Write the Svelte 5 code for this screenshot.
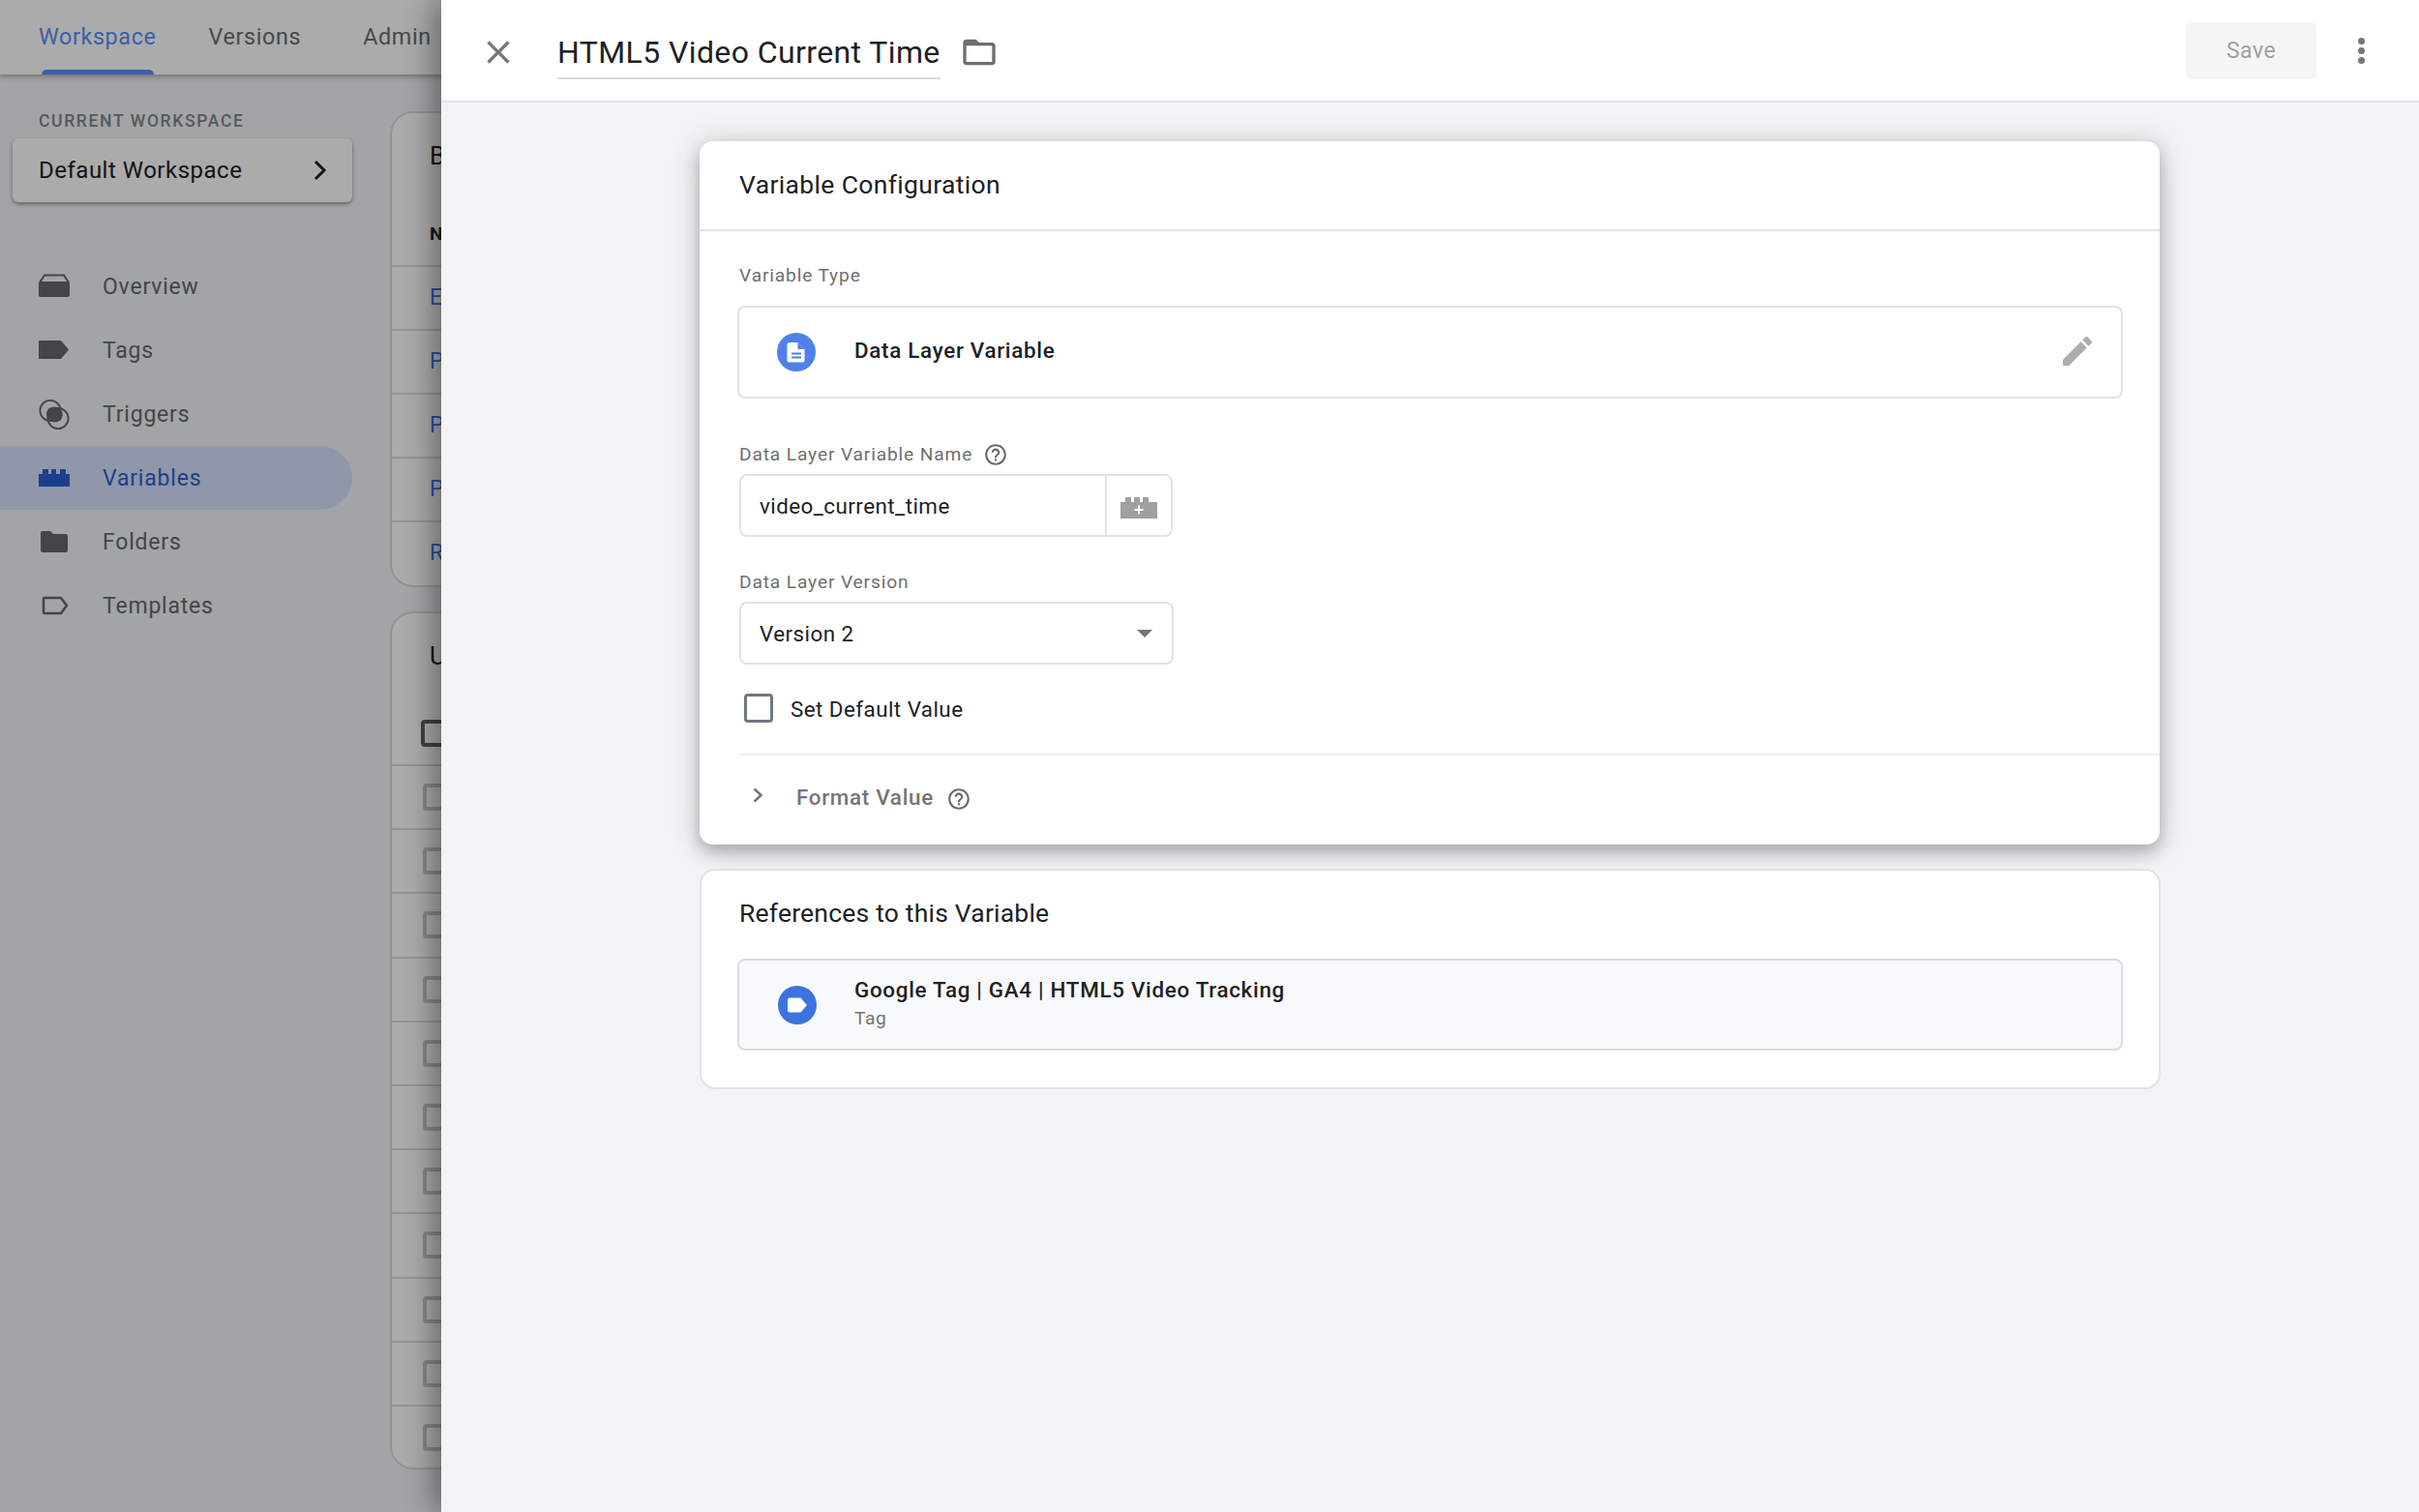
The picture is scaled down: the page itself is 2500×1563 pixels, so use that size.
<script>
  const tabs = [
    { label: 'Workspace', active: true },
    { label: 'Versions' },
    { label: 'Admin' }
  ]

  const nav = [
    { id: 'overview', label: 'Overview' },
    { id: 'tags', label: 'Tags', d: 'M0 6h23l8 9.5-8 9.5H0z' },
    { id: 'triggers', label: 'Triggers' },
    { id: 'variables', label: 'Variables', active: true, d: 'M4 7h6v5h3V7h5v5h4V7h6v5h4v13H0V12h4z' },
    { id: 'folders', label: 'Folders', d: 'M4 5h8l3 3h13a2 2 0 0 1 2 2v15a2 2 0 0 1-2 2H4a2 2 0 0 1-2-2V7a2 2 0 0 1 2-2z' },
    { id: 'templates', label: 'Templates' }
  ]

  const builtIn = ['Event', 'Page Hostname', 'Page Path', 'Page URL', 'Referrer']
  const userRows = Array.from({ length: 11 })

  const help =
    'M11 18h2v-2h-2v2zm1-16C6.48 2 2 6.48 2 12s4.48 10 10 10 10-4.48 10-10S17.52 2 12 2zm0 18c-4.41 0-8-3.59-8-8s3.59-8 8-8 8 3.59 8 8-3.59 8-8 8zm0-14c-2.21 0-4 1.79-4 4h2c0-1.1.9-2 2-2s2 .9 2 2c0 2-3 1.75-3 5h2c0-2.25 3-2.5 3-5 0-2.21-1.79-4-4-4z'
</script>

<div class="shell">
  <div class="page">
    <div class="tabbar">
      {#each tabs as tab}
        <div class="tab" class:active={tab.active}>{tab.label}</div>
      {/each}
    </div>

    <div class="body">
      <aside class="sidebar">
        <div class="ws-label">CURRENT WORKSPACE</div>
        <div class="ws-button">
          <span>Default Workspace</span>
          <svg width="16" height="24" viewBox="0 0 16 24"><path d="M3 3l9 9-9 9" fill="none" stroke="currentColor" stroke-width="3" /></svg>
        </div>
        <nav class="nav">
          {#each nav as item}
            <div class="nav-item" class:active={item.active}>
              <svg class="nav-icon" width="32" height="32" viewBox="0 0 32 32">
                {#if item.id === 'overview'}
                  <path d="M1 12l5-7.5h20l5 7.5" fill="none" stroke="currentColor" stroke-width="2" />
                  <path d="M2 11h28a2 2 0 0 1 2 2v12a2 2 0 0 1-2 2H2a2 2 0 0 1-2-2V13a2 2 0 0 1 2-2z" fill="currentColor" />
                {:else if item.id === 'triggers'}
                  <circle cx="12" cy="12.5" r="10.6" fill="none" stroke="currentColor" stroke-width="1.8" />
                  <circle cx="20" cy="20.5" r="10.6" fill="none" stroke="currentColor" stroke-width="1.8" />
                  <path d="M10 10.5a10.6 10.6 0 0 1 12.6 0a10.6 10.6 0 0 1 0 12a10.6 10.6 0 0 1-12.6 0a10.6 10.6 0 0 1 0-12z" fill="currentColor" />
                {:else if item.id === 'templates'}
                  <path d="M6 8h17l6 8-6 8H6a1 1 0 0 1-1-1V9a1 1 0 0 1 1-1z" fill="none" stroke="currentColor" stroke-width="2.5" stroke-linejoin="round" />
                {:else}
                  <path d={item.d} fill="currentColor" />
                {/if}
              </svg>
              <span>{item.label}</span>
            </div>
          {/each}
        </nav>
      </aside>

      <div class="lists">
        <section class="list-card builtin">
          <div class="list-title">Built-In Variables</div>
          <div class="list-head">Name</div>
          {#each builtIn as name}
            <div class="list-row link">{name}</div>
          {/each}
        </section>
        <section class="list-card user">
          <div class="list-title user-title">User-Defined Variables</div>
          <div class="user-check"><span class="box dark"></span></div>
          {#each userRows as _}
            <div class="list-row user-row"><span class="box"></span></div>
          {/each}
        </section>
      </div>
    </div>
  </div>

  <div class="scrim"></div>

  <div class="drawer">
    <header class="drawer-head">
      <svg class="close" width="40" height="40" viewBox="0 0 24 24"><path d="M19 6.41L17.59 5 12 10.59 6.41 5 5 6.41 10.59 12 5 17.59 6.41 19 12 13.41 17.59 19 19 17.59 13.41 12z" fill="currentColor" /></svg>
      <div class="title">HTML5 Video Current Time</div>
      <svg class="folder" width="40" height="40" viewBox="0 0 24 24"><path d="M20 6h-8l-2-2H4c-1.1 0-2 .9-2 2v12c0 1.1.9 2 2 2h16c1.1 0 2-.9 2-2V8c0-1.1-.9-2-2-2zm0 12H4V8h16v10z" fill="currentColor" /></svg>
      <div class="save">Save</div>
      <div class="more"><i></i><i></i><i></i></div>
    </header>

    <main class="drawer-main">
      <section class="card config">
        <h2 class="card-title">Variable Configuration</h2>
        <div class="card-body">
          <div class="label type-label">Variable Type</div>
          <div class="type-box">
            <svg width="40" height="40" viewBox="0 0 40 40">
              <circle cx="20" cy="20" r="20" fill="#4f81ec" />
              <path d="M12.5 10h9l7 7v11.5a2 2 0 0 1-2 2h-14a2 2 0 0 1-2-2V12a2 2 0 0 1 2-2z" fill="#fff" />
              <path d="M21.5 10v7h7z" fill="#4f81ec" />
              <path d="M15 21.5h10M15 25.5h10" stroke="#4f81ec" stroke-width="2" />
            </svg>
            <span class="type-name">Data Layer Variable</span>
            <svg class="pencil" width="40" height="40" viewBox="0 0 24 24"><path d="M3 17.25V21h3.75L17.81 9.94l-3.75-3.75L3 17.25zM20.71 7.04c.39-.39.39-1.02 0-1.41l-2.34-2.34c-.39-.39-1.02-.39-1.41 0l-1.83 1.83 3.75 3.75 1.83-1.83z" fill="currentColor" /></svg>
          </div>

          <div class="label name-label">
            Data Layer Variable Name
            <svg class="help" width="26" height="26" viewBox="0 0 24 24"><path d={help} fill="currentColor" /></svg>
          </div>
          <div class="field name-field">
            <span class="field-value">video_current_time</span>
            <div class="field-action">
              <svg width="38" height="22" viewBox="0 0 38 22">
                <path d="M5 0h6v5h3V0h6v5h3V0h6v5h9v17H0V5h5z" fill="#a0a0a0" />
                <path d="M19 8.5v9M14.5 13h9" stroke="#fff" stroke-width="2" />
              </svg>
            </div>
          </div>

          <div class="label version-label">Data Layer Version</div>
          <div class="field version-field">
            <span class="field-value">Version 2</span>
            <span class="caret"></span>
          </div>

          <div class="check-row">
            <span class="check"></span>
            <span class="check-text">Set Default Value</span>
          </div>
        </div>

        <div class="format-row">
          <svg class="format-chevron" width="12" height="16" viewBox="0 0 12 16"><path d="M1.5 1.5l7 6.5-7 6.5" fill="none" stroke="currentColor" stroke-width="2.6" /></svg>
          <span class="format-label">Format Value</span>
          <svg class="help format-help" width="26" height="26" viewBox="0 0 24 24"><path d={help} fill="currentColor" /></svg>
        </div>
      </section>

      <section class="card refs">
        <h2 class="refs-title">References to this Variable</h2>
        <div class="ref-box">
          <svg width="40" height="40" viewBox="0 0 40 40">
            <circle cx="20" cy="20" r="20" fill="#3c73e0" />
            <path d="M12 12.5h11.5L30 20l-6.5 7.5H12a2 2 0 0 1-2-2v-11a2 2 0 0 1 2-2z" fill="#fff" />
          </svg>
          <div class="ref-text">
            <div class="ref-name">Google Tag | GA4 | HTML5 Video Tracking</div>
            <div class="ref-kind">Tag</div>
          </div>
        </div>
      </section>
    </main>
  </div>
</div>

<style>
  :global(body) {
    margin: 0;
  }

  .shell {
    position: relative;
    width: 2500px;
    height: 1563px;
    overflow: hidden;
    background: #f4f5f8;
    font-family: Roboto, 'Liberation Sans', sans-serif;
    color: #202124;
  }

  /* page behind the drawer */
  .page {
    height: 100%;
    display: flex;
    flex-direction: column;
  }

  .tabbar {
    height: 77px;
    flex: none;
    display: flex;
    gap: 54px;
    padding-left: 40px;
    background: #fff;
    box-shadow: 0 2px 6px rgba(0, 0, 0, 0.35);
    position: relative;
  }

  .tab {
    position: relative;
    height: 74px;
    line-height: 77px;
    font-size: 23.4px;
    letter-spacing: 0.6px;
    color: #6a6e73;
  }

  .tab:last-child {
    margin-left: 10px;
  }

  .tab.active {
    color: #5890fa;
  }

  .tab.active::after {
    content: '';
    position: absolute;
    left: 3px;
    right: 3px;
    bottom: -3px;
    height: 5px;
    border-radius: 5px 5px 0 0;
    background: #5890fa;
  }

  .body {
    flex: 1;
    display: flex;
    min-height: 0;
  }

  .sidebar {
    width: 403px;
    flex: none;
  }

  .ws-label {
    margin: 38px 0 8px 40px;
    line-height: 20px;
    font-size: 17.6px;
    font-weight: 500;
    letter-spacing: 1.6px;
    color: #80868b;
  }

  .ws-button {
    width: 351px;
    height: 66px;
    margin-left: 13px;
    padding: 0 25px 0 27px;
    box-sizing: border-box;
    display: flex;
    align-items: center;
    justify-content: space-between;
    border-radius: 6px;
    background: #fff;
    box-shadow: 0 2px 4px rgba(0, 0, 0, 0.4);
    font-size: 24px;
    letter-spacing: 0.5px;
    color: #202124;
  }

  .nav {
    margin-top: 54px;
  }

  .nav-item {
    width: 364px;
    height: 66px;
    padding-left: 40px;
    box-sizing: border-box;
    display: flex;
    align-items: center;
    gap: 34px;
    font-size: 23px;
    letter-spacing: 0.8px;
    color: #65686e;
  }

  .nav-item.active {
    background: #d6e2fd;
    border-radius: 0 33px 33px 0;
    color: #2a5fd0;
  }

  .nav-icon {
    flex: none;
  }

  .lists {
    flex: 1;
    min-width: 0;
  }

  .list-card {
    box-sizing: border-box;
    border: 2px solid #dadce0;
    border-radius: 24px;
    background: #fff;
    overflow: hidden;
  }

  .builtin {
    height: 492px;
    margin-top: 38px;
  }

  .user {
    height: 887px;
    margin-top: 25px;
  }

  .list-title {
    padding: 24px 0 0 39px;
    line-height: 40px;
    font-size: 25.6px;
  }

  .list-head {
    height: 93px;
    padding: 46px 0 0 39px;
    box-sizing: border-box;
    line-height: 30px;
    font-size: 19.2px;
    font-weight: 700;
  }

  .list-row {
    height: 66px;
    box-sizing: border-box;
    border-top: 2px solid #dadce0;
    padding-left: 32px;
    padding-bottom: 2px;
    display: flex;
    align-items: center;
    font-size: 23px;
  }

  .list-row.link {
    padding-left: 39px;
    color: #3d75e8;
  }

  .user-row {
    height: 66.2px;
    padding-bottom: 0;
  }

  .user-check {
    height: 92px;
    padding: 46px 0 0 30px;
    box-sizing: border-box;
  }

  .box {
    display: block;
    width: 30px;
    height: 28px;
    box-sizing: border-box;
    border: 4px solid #c8c9cb;
    border-radius: 4px;
  }

  .box.dark {
    border-color: #5f6368;
  }

  .scrim {
    position: absolute;
    inset: 0;
    background: rgba(0, 0, 0, 0.33);
  }

  /* drawer */
  .drawer {
    position: absolute;
    top: 0;
    left: 456px;
    right: 0;
    bottom: 0;
    background: #f1f3f4;
    box-shadow: -8px 0 28px rgba(0, 0, 0, 0.4);
  }

  .drawer-head {
    height: 106px;
    box-sizing: border-box;
    display: flex;
    align-items: center;
    padding: 0 14px 0 39px;
    background: #fff;
    border-bottom: 2px solid #e0e2e6;
  }

  .close {
    margin-top: 3px;
    color: #757575;
    flex: none;
  }

  .title {
    align-self: flex-start;
    margin: 29px 0 0 41px;
    height: 53px;
    line-height: 50px;
    box-sizing: border-box;
    border-bottom: 2px solid #dadce0;
    font-size: 32px;
    letter-spacing: 0.4px;
    color: #202124;
    white-space: nowrap;
  }

  .folder {
    margin: 3px 0 0 20px;
    color: #6e6e6e;
    flex: none;
  }

  .save {
    margin-left: auto;
    width: 135px;
    height: 59px;
    line-height: 60px;
    text-align: center;
    border-radius: 6px;
    background: #f5f5f5;
    color: #a0a0a0;
    font-size: 23px;
    letter-spacing: 0.5px;
  }

  .more {
    width: 92px;
    display: flex;
    flex-direction: column;
    align-items: center;
    gap: 3px;
  }

  .more i {
    width: 7px;
    height: 7px;
    border-radius: 50%;
    background: #777;
  }

  .drawer-main {
    padding: 40px 268px 0 267px;
  }

  .card {
    box-sizing: border-box;
    background: #fff;
    border-radius: 14px;
  }

  .config {
    height: 727px;
    box-shadow: 0 8px 16px rgba(60, 64, 67, 0.32), 0 2px 32px rgba(60, 64, 67, 0.2);
  }

  .card-title {
    margin: 0;
    height: 91px;
    box-sizing: content-box;
    padding-left: 41px;
    line-height: 90px;
    font-size: 26.5px;
    font-weight: 400;
    letter-spacing: 0.35px;
    border-bottom: 2px solid #e0e2e6;
  }

  .card-body {
    padding: 0 38px 0 39px;
  }

  .label {
    line-height: 24px;
    font-size: 19.2px;
    letter-spacing: 0.85px;
    color: #6f6f6f;
    display: flex;
    align-items: center;
  }

  .type-label {
    margin-top: 34px;
    margin-left: 2px;
  }

  .type-box {
    height: 96px;
    margin-top: 19px;
    box-sizing: border-box;
    display: flex;
    align-items: center;
    padding: 0 25px 0 39px;
    border: 2px solid #e0e2e6;
    border-radius: 8px;
  }

  .type-name {
    margin-left: 40px;
    margin-top: -4px;
    font-size: 22.4px;
    font-weight: 500;
    letter-spacing: 0.7px;
  }

  .pencil {
    margin: -2px 0 0 auto;
    color: #adadad;
  }

  .name-label {
    margin: 46px 0 8px 2px;
  }

  .help {
    margin: -1px 0 -1px 11px;
    color: #6a6a6a;
    flex: none;
  }

  .field {
    height: 65px;
    margin-left: 2px;
    box-sizing: border-box;
    display: flex;
    align-items: center;
    border: 2px solid #e0e2e6;
    border-radius: 8px;
    font-size: 22.4px;
    letter-spacing: 0.45px;
  }

  .name-field {
    width: 448px;
  }

  .version-field {
    width: 449px;
  }

  .field-value {
    padding-left: 19px;
    flex: 1;
  }

  .field-action {
    width: 66px;
    height: 100%;
    display: flex;
    align-items: center;
    justify-content: center;
    border-left: 2px solid #e0e2e6;
  }

  .field-action svg {
    margin-top: 4px;
  }

  .caret {
    width: 0;
    height: 0;
    margin-right: 20px;
    border-left: 8px solid transparent;
    border-right: 8px solid transparent;
    border-top: 8px solid #757575;
  }

  .version-label {
    margin: 35px 0 8px 2px;
  }

  .check-row {
    margin: 30px 0 0 7px;
    height: 30px;
    display: flex;
    align-items: center;
    gap: 18px;
    font-size: 22.4px;
    letter-spacing: 0.45px;
  }

  .check-text {
    margin-top: 2px;
  }

  .check {
    width: 30px;
    height: 30px;
    box-sizing: border-box;
    border: 3px solid #6f7780;
    border-radius: 4px;
  }

  .format-row {
    margin: 32px 0 0 41px;
    border-top: 2px solid #eceef0;
    height: 93px;
    padding: 0 0 5px 14px;
    box-sizing: border-box;
    display: flex;
    align-items: center;
    color: #757575;
  }

  .format-label {
    margin-left: 33px;
    font-size: 22.4px;
    font-weight: 500;
    letter-spacing: 0.7px;
  }

  .format-chevron {
    margin-top: -4px;
  }

  .format-help {
    margin: 4px 0 0 13px;
  }

  .refs {
    height: 228px;
    margin: 25px -1px 0 0;
    padding: 0 37px 0 39px;
    border: 2px solid #e0e2e6;
    border-radius: 16px;
  }

  .refs-title {
    margin: 0;
    padding: 22px 0 0;
    line-height: 44px;
    font-size: 26.5px;
    font-weight: 400;
    letter-spacing: 0.2px;
  }

  .ref-box {
    height: 95px;
    margin: 25px 0 0 -2px;
    box-sizing: border-box;
    display: flex;
    align-items: center;
    gap: 39px;
    padding-left: 40px;
    border: 2px solid #dadce0;
    border-radius: 8px;
    background: #f8f9fa;
  }

  .ref-text {
    margin-top: -4px;
  }

  .ref-name {
    line-height: 30px;
    font-size: 22.4px;
    font-weight: 500;
    letter-spacing: 0.7px;
  }

  .ref-kind {
    line-height: 26px;
    margin-top: 2px;
    font-size: 19.2px;
    letter-spacing: 0.6px;
    color: #757575;
  }
</style>
